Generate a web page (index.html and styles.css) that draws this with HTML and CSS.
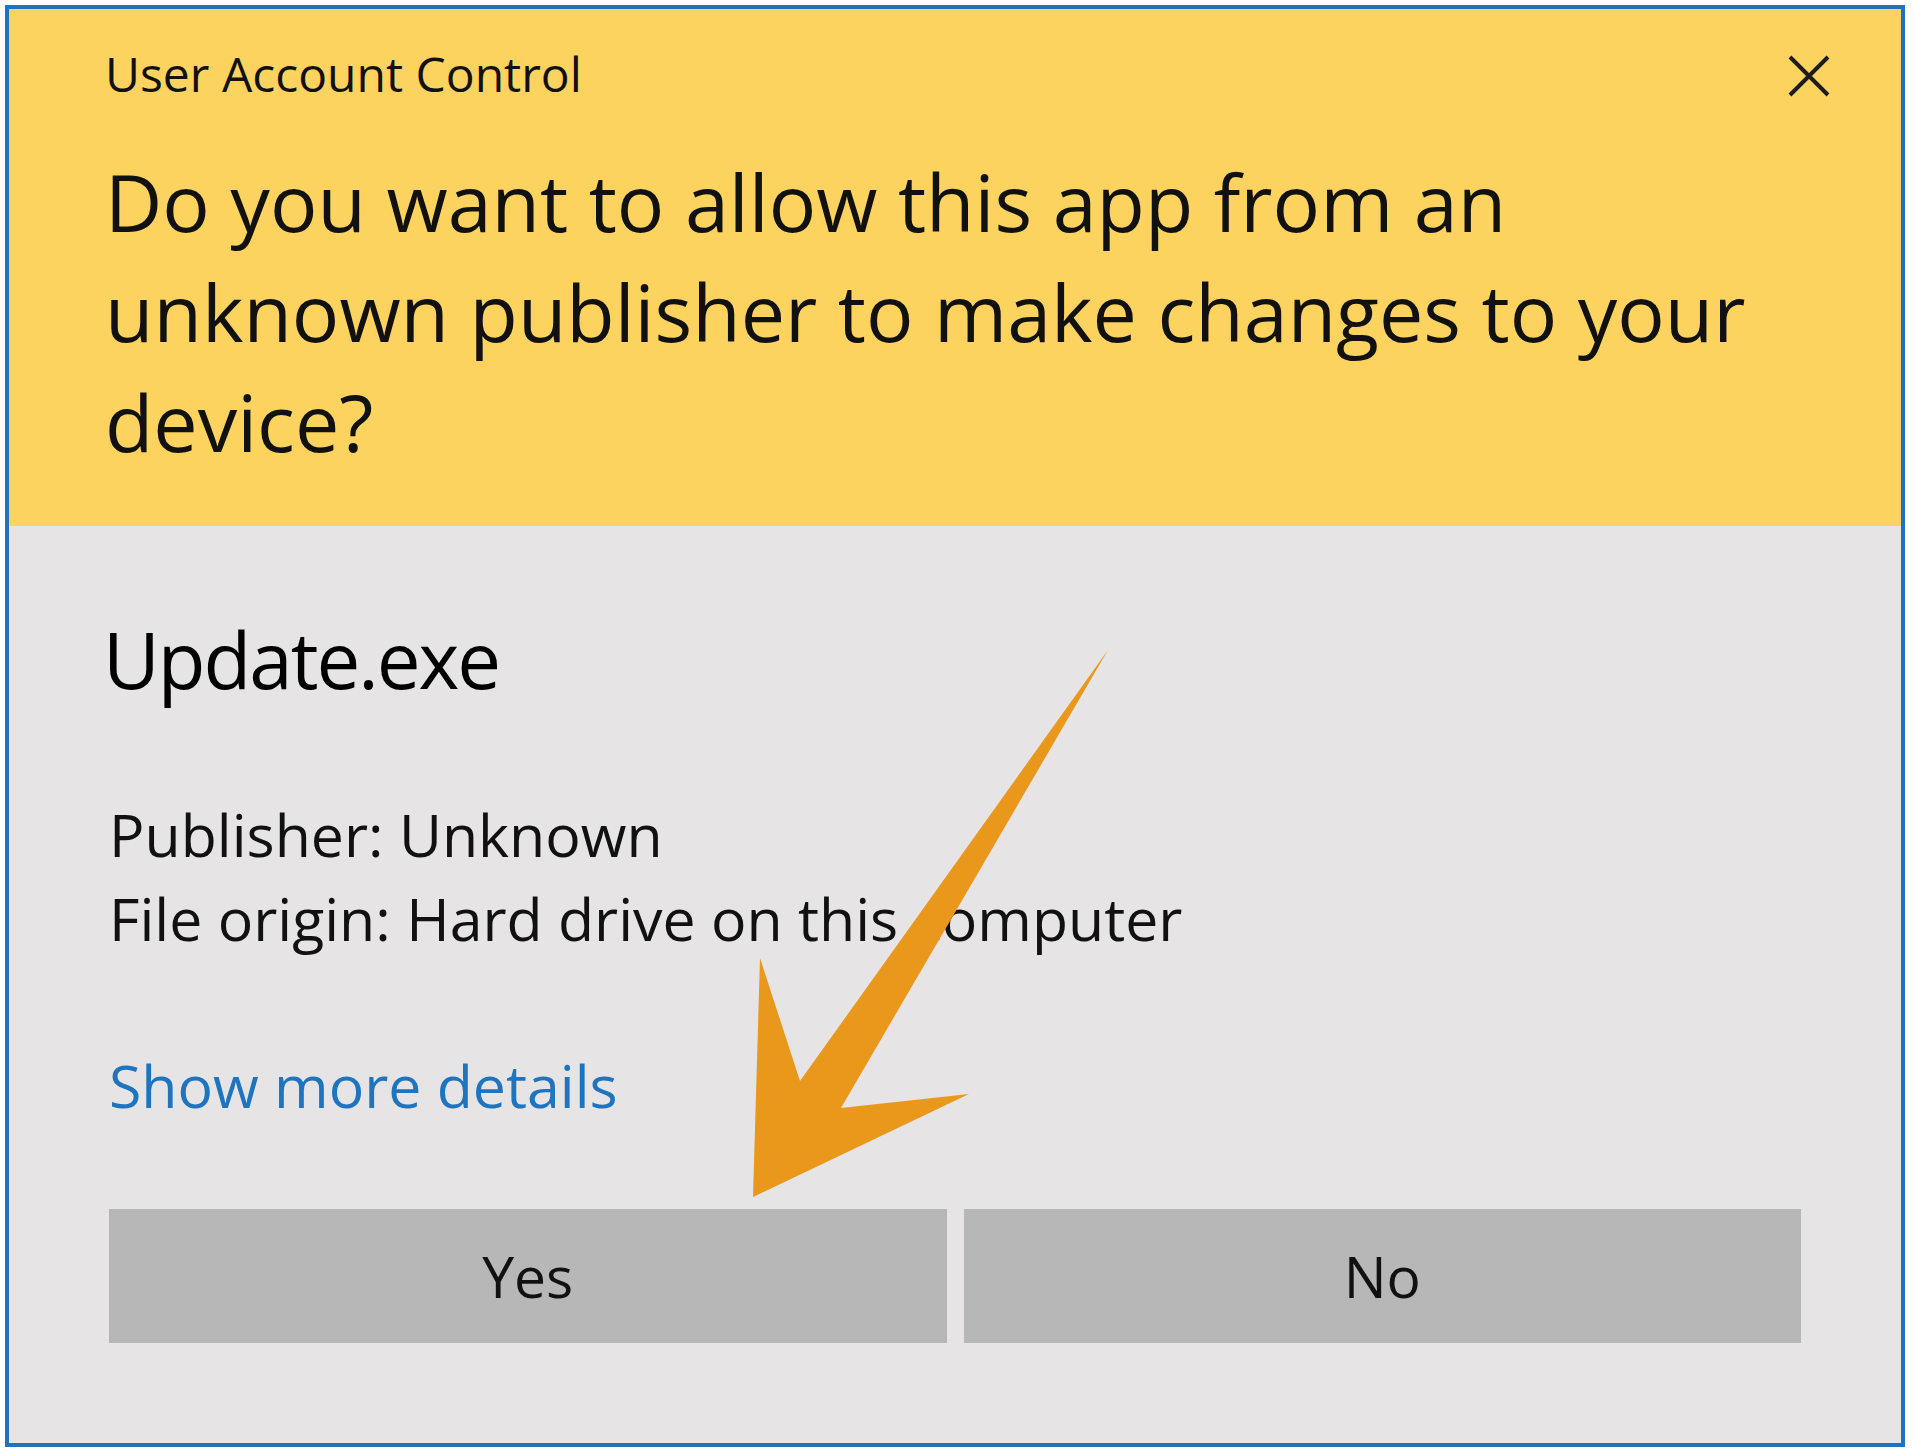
FILE: index.html
```html
<!DOCTYPE html>
<html lang="en">
<head>
    <meta charset="UTF-8">
    <title>User Account Control</title>
    <link rel="stylesheet" href="styles.css">
</head>
<body>
    <div class="dialog">
        <div class="header">
            <div class="title-row">
                <span class="title">User Account Control</span>
                <svg class="close" width="42" height="42" viewBox="0 0 42 42">
                    <path d="M2 2 L40 40 M40 2 L2 40" stroke="#1c1c1c" stroke-width="4"/>
                </svg>
            </div>
            <h1 class="question">Do you want to allow this app from an unknown publisher to make changes to your device?</h1>
        </div>
        <div class="content">
            <div class="app-name">Update.exe</div>
            <div class="info">
                <p>Publisher: Unknown</p>
                <p>File origin: Hard drive on this computer</p>
            </div>
            <a class="details" href="#">Show more details</a>
            <div class="buttons">
                <button class="btn">Yes</button>
                <button class="btn">No</button>
            </div>
        </div>
    </div>
    <svg class="arrow" width="1914" height="1451" viewBox="0 0 1914 1451">
        <polygon points="1108,650 841,1108 969,1094 753,1197 760,958 800,1081" fill="#e9981c"/>
    </svg>
</body>
</html>
```

FILE: styles.css
```css
body {
    margin: 0;
    background-color: #fff;
    font-family: "Open Sans", "Noto Sans", sans-serif;
    color: #111;
}
.dialog {
    width: 1900px;
    margin: 5px 0 0 5px;
    border: 4px solid #1e73be;
    box-sizing: border-box;
}
.header {
    background-color: #fdd35f;
    padding: 35px 71px 49px 96px;
}
.title-row {
    display: flex;
    justify-content: space-between;
    align-items: center;
    height: 60px;
}
.title {
    font-size: 48px;
    line-height: 60px;
}
.close {
    margin-top: 4px;
}
.question {
    margin: 43px 0 0 0;
    font-size: 79px;
    line-height: 110px;
    font-weight: 400;
}
.content {
    background-color: #e6e4e5;
    padding: 83px 100px 100px 100px;
}
.app-name {
    font-size: 78px;
    line-height: 100px;
    letter-spacing: -2px;
    margin-left: -6px;
    color: #000;
}
.info {
    margin-top: 83px;
    font-size: 59px;
    line-height: 84px;
}
.info p {
    margin: 0;
}
.details {
    display: block;
    margin-top: 83px;
    font-size: 59px;
    line-height: 84px;
    color: #1f74c0;
    text-decoration: none;
}
.buttons {
    display: grid;
    grid-template-columns: 1fr 1fr;
    gap: 17px;
    margin-top: 82px;
}
.btn {
    height: 134px;
    background-color: #b7b7b7;
    border: none;
    font-family: inherit;
    font-size: 57px;
    color: #111;
    padding: 0;
}
.arrow {
    position: absolute;
    top: 0;
    left: 0;
    pointer-events: none;
}
```
